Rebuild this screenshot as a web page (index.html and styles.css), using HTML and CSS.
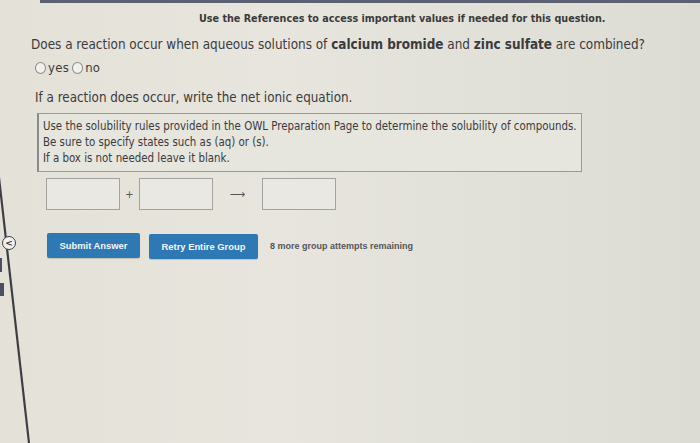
FILE: index.html
```html
<!DOCTYPE html>
<html>
<head>
<meta charset="utf-8">
<link rel="stylesheet" href="styles.css">
</head>
<body>
<div class="topbar"></div>
<div class="page">
  <div class="refs">Use the References to access important values if needed for this question.</div>
  <div class="question">Does a reaction occur when aqueous solutions of <b>calcium bromide</b> and <b>zinc sulfate</b> are combined?</div>
  <div class="radios">
    <span class="radio"></span><span class="rlabel">yes</span>
    <span class="radio"></span><span class="rlabel">no</span>
  </div>
  <div class="prompt">If a reaction does occur, write the net ionic equation.</div>
  <div class="hint">
    <div>Use the solubility rules provided in the OWL Preparation Page to determine the solubility of compounds.</div>
    <div>Be sure to specify states such as (aq) or (s).</div>
    <div>If a box is not needed leave it blank.</div>
  </div>
  <div class="equation">
    <span class="box"></span>
    <span class="plus">+</span>
    <span class="box"></span>
    <span class="arrow">&#x27F6;</span>
    <span class="box"></span>
  </div>
  <div class="actions">
    <button class="btn btn-submit">Submit Answer</button>
    <button class="btn btn-retry">Retry Entire Group</button>
    <span class="attempts">8 more group attempts remaining</span>
  </div>
</div>
<svg class="edge" width="40" height="443" viewBox="0 0 40 443">
  <rect x="0" y="258" width="2" height="14" fill="#4a4f63"/>
  <rect x="0" y="283" width="4" height="13" fill="#4a4f63"/>
  <line x1="-3" y1="160" x2="29" y2="443" stroke="#3e3f46" stroke-width="2.2"/>
</svg>
<div class="backbtn">&lt;</div>
</body>
</html>
```
FILE: styles.css
```css
html, body {
  margin: 0;
  padding: 0;
  width: 700px;
  height: 443px;
  overflow: hidden;
}
body {
  background: linear-gradient(90deg, #e4e1d8 0%, #e7e5dd 40%, #dcdcd5 100%);
  font-family: "DejaVu Sans Condensed", "DejaVu Sans", Verdana, sans-serif;
  color: #3b3b3d;
  position: relative;
}
.topbar {
  height: 3px;
  margin-left: 40px;
  background: #5b6072;
}
.page {
  padding-left: 31px;
}
.refs {
  margin-left: 168px;
  margin-top: 9px;
  font-size: 10.7px;
  font-weight: bold;
  line-height: 13px;
  color: #3a3a3c;
}
.question {
  margin-top: 12px;
  font-size: 13.4px;
  line-height: 16px;
}
.question b {
  font-weight: bold;
}
.radios {
  margin-top: 7px;
  margin-left: 4px;
  display: flex;
  align-items: center;
  font-size: 13px;
  line-height: 16px;
}
.radio {
  width: 9px;
  height: 10px;
  border: 1px solid #8a8a8a;
  border-radius: 50%;
  background: #f2f1ec;
  margin-right: 2px;
}
.rlabel {
  margin-right: 3px;
  letter-spacing: 0.3px;
}
.prompt {
  margin-top: 14px;
  margin-left: 4px;
  font-size: 13.3px;
  line-height: 16px;
}
.hint {
  margin-top: 7px;
  margin-left: 6px;
  width: 535px;
  border: 1px solid #9a9a98;
  border-left: 2px solid #8a8a88;
  padding: 4px 3px 5px 4px;
  font-size: 11.4px;
  line-height: 16px;
  background: #e6e5de;
}
.equation {
  margin-top: 5px;
  margin-left: 15px;
  display: flex;
  align-items: center;
  height: 34px;
}
.box {
  width: 72px;
  height: 30px;
  border: 1px solid #a2a2a0;
  background: #e9e8e2;
}
.plus {
  width: 19px;
  text-align: center;
  font-size: 11px;
  color: #555;
}
.arrow {
  width: 49px;
  text-align: center;
  font-size: 12px;
  color: #555;
}
.actions {
  margin-top: 21px;
  margin-left: 16px;
  display: flex;
  align-items: center;
}
.btn {
  font-family: "Liberation Sans", Arial, sans-serif;
  font-weight: bold;
  font-size: 9.4px;
  color: #f3f6fa;
  background: #2e78b4;
  border: none;
  border-radius: 2px;
  height: 25px;
  padding: 0;
  box-shadow: 0 1px 1px rgba(0,0,0,0.15);
}
.btn-submit {
  width: 93px;
}
.btn-retry {
  width: 109px;
  margin-left: 9px;
  margin-top: 2px;
}
.attempts {
  margin-left: 12px;
  font-family: "Liberation Sans", Arial, sans-serif;
  font-weight: bold;
  font-size: 9px;
  color: #55565a;
}
.edge {
  position: absolute;
  left: 0;
  top: 0;
}
.backbtn {
  position: absolute;
  left: 2px;
  top: 236px;
  width: 12px;
  height: 12px;
  border: 1.5px solid #3e3f46;
  border-radius: 50%;
  background: #f1f0ec;
  font-family: "DejaVu Sans", sans-serif;
  font-weight: bold;
  font-size: 9px;
  line-height: 12px;
  text-align: center;
  color: #333;
}
```
